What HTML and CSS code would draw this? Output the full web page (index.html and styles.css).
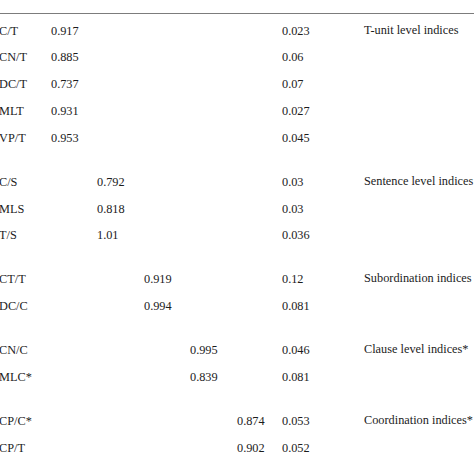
FILE: index.html
```html
<!DOCTYPE html>
<html>
<head>
<meta charset="utf-8">
<link rel="stylesheet" href="styles.css">
</head>
<body>
<div class="table">
  <div class="rule"></div>
  <div class="group">
    <div class="row"><span>C/T</span><span>0.917</span><span></span><span></span><span></span><span></span><span>0.023</span><span class="cat">T-unit level indices</span></div>
    <div class="row"><span>CN/T</span><span>0.885</span><span></span><span></span><span></span><span></span><span>0.06</span><span></span></div>
    <div class="row"><span>DC/T</span><span>0.737</span><span></span><span></span><span></span><span></span><span>0.07</span><span></span></div>
    <div class="row"><span>MLT</span><span>0.931</span><span></span><span></span><span></span><span></span><span>0.027</span><span></span></div>
    <div class="row"><span>VP/T</span><span>0.953</span><span></span><span></span><span></span><span></span><span>0.045</span><span></span></div>
  </div>
  <div class="group">
    <div class="row"><span>C/S</span><span></span><span>0.792</span><span></span><span></span><span></span><span>0.03</span><span class="cat">Sentence level indices</span></div>
    <div class="row"><span>MLS</span><span></span><span>0.818</span><span></span><span></span><span></span><span>0.03</span><span></span></div>
    <div class="row"><span>T/S</span><span></span><span>1.01</span><span></span><span></span><span></span><span>0.036</span><span></span></div>
  </div>
  <div class="group">
    <div class="row"><span>CT/T</span><span></span><span></span><span>0.919</span><span></span><span></span><span>0.12</span><span class="cat">Subordination indices</span></div>
    <div class="row"><span>DC/C</span><span></span><span></span><span>0.994</span><span></span><span></span><span>0.081</span><span></span></div>
  </div>
  <div class="group">
    <div class="row"><span>CN/C</span><span></span><span></span><span></span><span>0.995</span><span></span><span>0.046</span><span class="cat">Clause level indices*</span></div>
    <div class="row"><span>MLC*</span><span></span><span></span><span></span><span>0.839</span><span></span><span>0.081</span><span></span></div>
  </div>
  <div class="group">
    <div class="row"><span>CP/C*</span><span></span><span></span><span></span><span></span><span>0.874</span><span>0.053</span><span class="cat">Coordination indices*</span></div>
    <div class="row"><span>CP/T</span><span></span><span></span><span></span><span></span><span>0.902</span><span>0.052</span><span></span></div>
  </div>
</div>
</body>
</html>
```
FILE: styles.css
```css
html, body {
  margin: 0;
  padding: 0;
  background: #ffffff;
  overflow: hidden;
}
.table {
  width: 474px;
  font-family: "Liberation Serif", "Times New Roman", serif;
  font-size: 12.3px;
  color: #1c1c1c;
  padding-top: 13px;
}
.rule {
  height: 0;
  border-top: 1px solid #7c7c7c;
  margin-bottom: 3.6px;
}
.group {
  display: flex;
  flex-direction: column;
}
.group + .group {
  margin-top: 17.2px;
}
.row {
  display: grid;
  grid-template-columns: 52px 46px 47px 46px 47px 45px 82px 1fr;
  height: 26.8px;
  line-height: 26.8px;
  white-space: nowrap;
  margin-left: -1px;
}
.row span {
  overflow: visible;
}
.cat {
  margin-top: -1px;
}
```
